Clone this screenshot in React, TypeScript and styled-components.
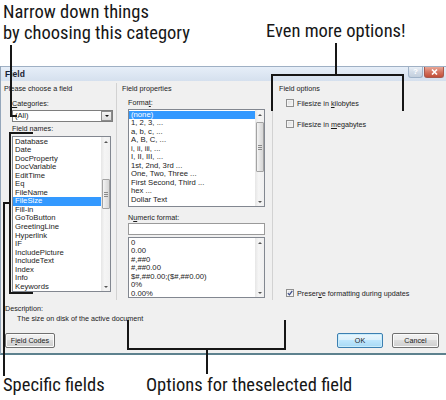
import React from "react";
import styled, { createGlobalStyle, css } from "styled-components";

const Global = createGlobalStyle`
  html, body { margin: 0; padding: 0; background: #ffffff; }
  body { font-family: "Liberation Sans", Arial, sans-serif; }
  #root { width: 446px; height: 400px; }
`;

const Page = styled.div`
  position: relative;
  width: 446px;
  height: 400px;
  overflow: hidden;
  background: #ffffff;
  display: flex;
  flex-direction: column;
`;

/* ---------- callouts ---------- */
const TopCallouts = styled.div`
  height: 66px;
  flex: none;
  display: grid;
  grid-template-columns: 263px 1fr;
  padding-left: 3px;
  box-sizing: border-box;
`;

const BottomCallouts = styled.div`
  flex: 1;
  display: grid;
  grid-template-columns: 143px 1fr;
  padding-left: 3px;
`;

const CalloutText = styled.div<{ $mt: number }>`
  margin-top: ${(p) => p.$mt}px;
  font-family: "Liberation Sans Narrow", "Arial Narrow", "Roboto", sans-serif;
  font-stretch: condensed;
  font-size: 18.5px;
  line-height: 21px;
  color: #161616;
  white-space: nowrap;
`;

const Leader = styled.div<{ $x: number; $y: number; $w: number; $h: number }>`
  position: absolute;
  left: ${(p) => p.$x}px;
  top: ${(p) => p.$y}px;
  width: ${(p) => p.$w}px;
  height: ${(p) => p.$h}px;
  background: #161616;
  z-index: 5;
`;

const Bracket = styled.div<{
  $x: number;
  $y: number;
  $w: number;
  $h: number;
  $open: "top" | "bottom" | "right";
}>`
  position: absolute;
  left: ${(p) => p.$x}px;
  top: ${(p) => p.$y}px;
  width: ${(p) => p.$w}px;
  height: ${(p) => p.$h}px;
  box-sizing: border-box;
  border: 2px solid #161616;
  ${(p) => p.$open === "top" && css`border-top: none;`}
  ${(p) => p.$open === "bottom" && css`border-bottom: none;`}
  ${(p) => p.$open === "right" && css`border-right: none;`}
  z-index: 5;
`;

/* ---------- dialog frame ---------- */
const Dialog = styled.div`
  flex: none;
  height: 289px;
  box-sizing: border-box;
  border-left: 1px solid #94a6ba;
  border-bottom: 2px solid #5d818e;
  background: #f0f0f0;
  display: flex;
  flex-direction: column;
  color: #1b1b1b;
  font-size: 7.2px;
`;

const TitleBar = styled.div`
  height: 15px;
  flex: none;
  box-sizing: border-box;
  border-top: 1px solid #9fb0c4;
  background: linear-gradient(#e6eef8, #d5e0ee);
  display: flex;
  align-items: flex-start;
  padding-left: 4px;
`;

const Title = styled.div`
  font-weight: bold;
  font-size: 8.5px;
  line-height: 14px;
  color: #1a2230;
`;

const TitleButtons = styled.div`
  margin-left: auto;
  display: flex;
  gap: 1px;
  margin-right: 2px;
`;

const CapButton = styled.div<{ $close?: boolean }>`
  width: ${(p) => (p.$close ? 20 : 15)}px;
  height: 11px;
  box-sizing: border-box;
  border: 1px solid ${(p) => (p.$close ? "#a8594d" : "#9fb2c8")};
  border-top: none;
  border-radius: 0 0 3px 3px;
  background: ${(p) =>
    p.$close
      ? "linear-gradient(#e9a797, #d4735f 50%, #c24f38)"
      : "linear-gradient(#e9eff6, #d2dce8 50%, #c3cfdd)"};
  display: flex;
  align-items: center;
  justify-content: center;
  color: #ffffff;
  font-weight: bold;
  font-size: 8px;
  line-height: 1;
`;

const Body = styled.div`
  flex: 1;
  display: flex;
  flex-direction: column;
`;

const Columns = styled.div`
  margin-top: 2px;
  height: 217px;
  display: flex;
  flex: none;
`;

const Column = styled.div<{ $w?: number; $pl: number; $sep?: boolean }>`
  ${(p) => (p.$w ? css`width: ${p.$w}px; flex: none;` : css`flex: 1;`)}
  box-sizing: border-box;
  padding-left: ${(p) => p.$pl}px;
  ${(p) => p.$sep && css`border-right: 1px solid #d2d2d2;`}
  display: flex;
  flex-direction: column;
`;

const GroupLabel = styled.div`
  line-height: 10px;
  margin-top: 1px;
  white-space: nowrap;
`;

const Inner = styled.div<{ $pl: number }>`
  padding-left: ${(p) => p.$pl}px;
  display: flex;
  flex-direction: column;
  flex: 1;
`;

const FieldLabel = styled.div<{ $mt: number }>`
  line-height: 10px;
  margin-top: ${(p) => p.$mt}px;
  white-space: nowrap;
`;

/* ---------- controls ---------- */
const Combo = styled.div`
  margin-top: 1px;
  width: 101px;
  height: 12px;
  box-sizing: border-box;
  border: 1px solid #7e7e7e;
  background: #ffffff;
  display: flex;
  align-items: stretch;
`;

const ComboText = styled.div`
  flex: 1;
  padding-left: 2px;
  line-height: 10px;
  font-size: 7.6px;
`;

const ComboButton = styled.div`
  width: 11px;
  box-sizing: border-box;
  border: 1px solid #8c8c8c;
  background: linear-gradient(#f4f4f4, #dcdcdc);
  display: flex;
  align-items: center;
  justify-content: center;
`;

const Caret = styled.div<{ $up?: boolean; $c?: string }>`
  width: 0;
  height: 0;
  border-left: 2.5px solid transparent;
  border-right: 2.5px solid transparent;
  ${(p) =>
    p.$up
      ? css`border-bottom: 2.5px solid ${p.$c || "#555555"};`
      : css`border-top: 2.5px solid ${p.$c || "#555555"};`}
`;

const ListBox = styled.div<{ $w: number; $h: number; $mt: number }>`
  margin-top: ${(p) => p.$mt}px;
  width: ${(p) => p.$w}px;
  height: ${(p) => p.$h}px;
  box-sizing: border-box;
  border: 1px solid #828790;
  background: #ffffff;
  display: flex;
  overflow: hidden;
`;

const Items = styled.div`
  flex: 1;
  min-width: 0;
  padding-top: 0.5px;
`;

const Item = styled.div<{ $sel?: boolean }>`
  height: 8.55px;
  line-height: 8.55px;
  font-size: 7.7px;
  padding-left: 2px;
  white-space: nowrap;
  overflow: hidden;
  ${(p) =>
    p.$sel &&
    css`
      background: #3399ff;
      color: #ffffff;
    `}
`;

const ScrollBar = styled.div`
  width: 9px;
  flex: none;
  background: linear-gradient(90deg, #e6e6e6, #f5f5f5 40%, #f0f0f0);
  display: flex;
  flex-direction: column;
  align-items: stretch;
`;

const ScrollArrow = styled.div`
  height: 9px;
  display: flex;
  align-items: center;
  justify-content: center;
  flex: none;
`;

const Thumb = styled.div<{ $off: number; $size: number }>`
  margin-top: ${(p) => p.$off}px;
  height: ${(p) => p.$size}px;
  margin-left: 0.5px;
  margin-right: 0.5px;
  box-sizing: border-box;
  border: 1px solid #a3a3a3;
  border-radius: 1px;
  background: linear-gradient(90deg, #f4f4f4, #e3e3e3 50%, #d6d6d6);
  display: flex;
  flex-direction: column;
  align-items: center;
  justify-content: center;
  gap: 1px;
`;

const Grip = styled.div`
  width: 4px;
  height: 1px;
  background: #8a8a8a;
`;

const Spacer = styled.div`
  flex: 1;
`;

const TextInput = styled.div`
  width: 137px;
  height: 12px;
  box-sizing: border-box;
  border: 1px solid #9a9a9a;
  background: #ffffff;
`;

const CheckRow = styled.div<{ $mt: number; $auto?: boolean }>`
  margin-top: ${(p) => (p.$auto ? "auto" : `${p.$mt}px`)};
  ${(p) => p.$auto && css`margin-bottom: ${p.$mt}px;`}
  display: flex;
  align-items: center;
  gap: 3px;
  height: 10px;
  white-space: nowrap;
`;

const Box = styled.div`
  width: 8px;
  height: 8px;
  box-sizing: border-box;
  border: 1px solid #8f8f8f;
  background: linear-gradient(135deg, #dcdcdc, #f7f7f7);
  box-shadow: inset 0 0 0 1px #f4f4f4;
  display: flex;
  align-items: center;
  justify-content: center;
  flex: none;
`;

const Description = styled.div`
  padding-left: 4px;
  display: flex;
  flex-direction: column;
`;

const DescText = styled.div`
  padding-left: 12px;
  line-height: 10px;
`;

const ButtonRow = styled.div`
  margin-top: 9px;
  display: flex;
  padding: 0 7px 0 4px;
  gap: 9px;
`;

const Button = styled.div<{ $w: number; $default?: boolean; $push?: boolean }>`
  width: ${(p) => p.$w}px;
  height: 15px;
  box-sizing: border-box;
  border: 1px solid ${(p) => (p.$default ? "#3c7fb1" : "#707070")};
  border-radius: 2px;
  background: ${(p) =>
    p.$default
      ? "linear-gradient(#eaf6fd, #d9f0fc 50%, #bee6fd 50%, #a7d9f5)"
      : "linear-gradient(#f2f2f2, #ebebeb 50%, #dddddd 50%, #cfcfcf)"};
  box-shadow: inset 0 0 0 1px ${(p) => (p.$default ? "#c9ecfb" : "#fbfbfb")};
  display: flex;
  align-items: center;
  justify-content: center;
  line-height: 1;
  ${(p) => p.$push && css`margin-left: auto;`}
`;

const fieldNames = [
  "Database",
  "Date",
  "DocProperty",
  "DocVariable",
  "EditTime",
  "Eq",
  "FileName",
  "FileSize",
  "Fill-in",
  "GoToButton",
  "GreetingLine",
  "Hyperlink",
  "IF",
  "IncludePicture",
  "IncludeText",
  "Index",
  "Info",
  "Keywords",
];

const formats = [
  "(none)",
  "1, 2, 3, ...",
  "a, b, c, ...",
  "A, B, C, ...",
  "i, ii, iii, ...",
  "I, II, III, ...",
  "1st, 2nd, 3rd ...",
  "One, Two, Three ...",
  "First Second, Third ...",
  "hex ...",
  "Dollar Text",
];

const numeric = [
  "0",
  "0.00",
  "#,##0",
  "#,##0.00",
  "$#,##0.00;($#,##0.00)",
  "0%",
  "0.00%",
];

function Scroll({ thumb }: { thumb?: [number, number] }) {
  return (
    <ScrollBar>
      <ScrollArrow>
        <Caret $up />
      </ScrollArrow>
      {thumb && (
        <Thumb $off={thumb[0]} $size={thumb[1]}>
          <Grip />
          <Grip />
          <Grip />
        </Thumb>
      )}
      <Spacer />
      <ScrollArrow>
        <Caret />
      </ScrollArrow>
    </ScrollBar>
  );
}

export default function App() {
  return (
    <>
      <Global />
      <Page>
        <TopCallouts>
          <CalloutText $mt={2}>
            Narrow down things
            <br />
            by choosing this category
          </CalloutText>
          <CalloutText $mt={21}>Even more options!</CalloutText>
        </TopCallouts>

        <Dialog>
          <TitleBar>
            <Title>Field</Title>
            <TitleButtons>
              <CapButton>?</CapButton>
              <CapButton $close>
                <svg width="7" height="6" viewBox="0 0 7 6">
                  <path d="M1 0.5 L6 5.5 M6 0.5 L1 5.5" stroke="#fff" strokeWidth="1.6" />
                </svg>
              </CapButton>
            </TitleButtons>
          </TitleBar>

          <Body>
            <Columns>
              <Column $w={116} $pl={3} $sep>
                <GroupLabel>Please choose a field</GroupLabel>
                <Inner $pl={8}>
                  <FieldLabel $mt={5}>
                    <u>C</u>ategories:
                  </FieldLabel>
                  <Combo>
                    <ComboText>(All)</ComboText>
                    <ComboButton>
                      <Caret $c="#111" />
                    </ComboButton>
                  </Combo>
                  <FieldLabel $mt={2}>
                    <u>F</u>ield names:
                  </FieldLabel>
                  <ListBox $w={99} $h={156} $mt={2}>
                    <Items>
                      {fieldNames.map((n) => (
                        <Item key={n} $sel={n === "FileSize"}>
                          {n}
                        </Item>
                      ))}
                    </Items>
                    <Scroll thumb={[33, 30]} />
                  </ListBox>
                </Inner>
              </Column>

              <Column $w={156} $pl={5} $sep>
                <GroupLabel>Field properties</GroupLabel>
                <Inner $pl={6}>
                  <FieldLabel $mt={4}>
                    Forma<u>t</u>:
                  </FieldLabel>
                  <ListBox $w={137} $h={98} $mt={1}>
                    <Items>
                      {formats.map((n) => (
                        <Item key={n} $sel={n === "(none)"}>
                          {n}
                        </Item>
                      ))}
                    </Items>
                    <Scroll thumb={[3, 50]} />
                  </ListBox>
                  <FieldLabel $mt={6}>
                    N<u>u</u>meric format:
                  </FieldLabel>
                  <TextInput />
                  <ListBox $w={137} $h={61} $mt={2}>
                    <Items>
                      {numeric.map((n) => (
                        <Item key={n}>{n}</Item>
                      ))}
                    </Items>
                    <Scroll />
                  </ListBox>
                </Inner>
              </Column>

              <Column $pl={6}>
                <GroupLabel>Field options</GroupLabel>
                <Inner $pl={7}>
                  <CheckRow $mt={4}>
                    <Box />
                    <span>
                      Filesize in <u>k</u>ilobytes
                    </span>
                  </CheckRow>
                  <CheckRow $mt={11}>
                    <Box />
                    <span>
                      Filesize in <u>m</u>egabytes
                    </span>
                  </CheckRow>
                  <CheckRow $mt={2} $auto>
                    <Box>
                      <svg width="6" height="6" viewBox="0 0 6 6">
                        <path d="M0.8 3.2 L2.4 4.8 L5.3 0.9" stroke="#3a4a86" strokeWidth="1.2" fill="none" />
                      </svg>
                    </Box>
                    <span>
                      Preser<u>v</u>e formatting during updates
                    </span>
                  </CheckRow>
                </Inner>
              </Column>
            </Columns>

            <Description>
              <FieldLabel $mt={4}>Description:</FieldLabel>
              <DescText>The size on disk of the active document</DescText>
            </Description>

            <ButtonRow>
              <Button $w={50}>
                F<u>i</u>eld Codes
              </Button>
              <Button $w={46} $default $push>
                OK
              </Button>
              <Button $w={47}>Cancel</Button>
            </ButtonRow>
          </Body>
        </Dialog>

        <BottomCallouts>
          <CalloutText $mt={20}>Specific fields</CalloutText>
          <CalloutText $mt={20}>Options for theselected field</CalloutText>
        </BottomCallouts>

        {/* top-left: category leader */}
        <Leader $x={10} $y={45} $w={2} $h={72} />
        <Leader $x={10} $y={115} $w={7} $h={2} />

        {/* top-right: field options bracket */}
        <Leader $x={335} $y={43} $w={2} $h={33} />
        <Bracket $x={271} $y={74} $w={133} $h={37} $open="bottom" />

        {/* field names bracket */}
        <Bracket $x={9} $y={132} $w={24} $h={162} $open="right" />
        <Leader $x={3} $y={202} $w={7} $h={2} />
        <Leader $x={3} $y={202} $w={2} $h={174} />

        {/* bottom: field properties bracket */}
        <Bracket $x={127} $y={320} $w={159} $h={30} $open="top" />
        <Leader $x={206} $y={349} $w={2} $h={25} />
      </Page>
    </>
  );
}
